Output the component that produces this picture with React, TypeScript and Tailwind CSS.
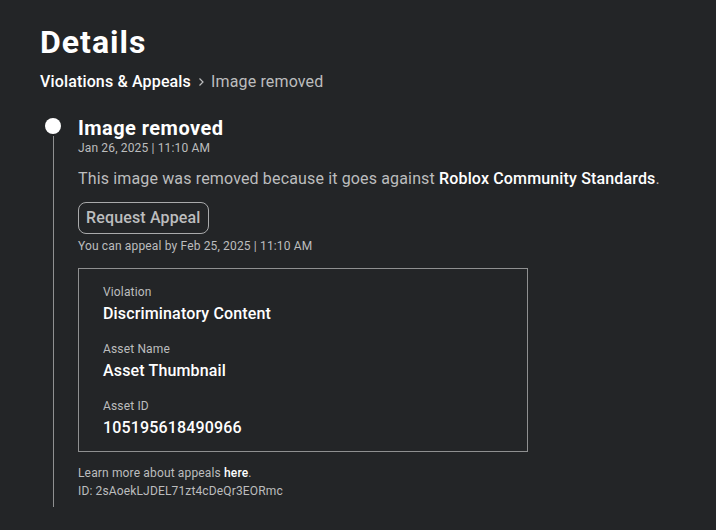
import React from 'react';

const Field = ({ label, value }: { label: string; value: string }) => (
  <div className="flex flex-col">
    <span className="text-[12px] leading-[16px] text-[#bcbdbe]">{label}</span>
    <span className="mt-[4px] text-[16px] leading-[20px] font-medium text-white">{value}</span>
  </div>
);

export default function App() {
  return (
    <div
      className="min-h-[530px] w-full bg-[#232527] px-10 pt-[26px] tracking-[0.15px] text-white"
      style={{ fontFamily: 'Roboto, "Noto Sans", sans-serif' }}
    >
      <h1 className="text-[32px] leading-[32px] font-bold tracking-[1px]">Details</h1>
      <nav className="mt-[14px] flex items-center text-[16px] leading-[20px]">
        <span className="font-medium text-white">Violations &amp; Appeals</span>
        <svg className="mx-[4px] h-[12px] w-[12px] text-[#bcbdbe]" viewBox="0 0 12 12" fill="none">
          <path d="M4.5 2.5 8 6l-3.5 3.5" stroke="currentColor" strokeWidth="1.2" />
        </svg>
        <span className="text-[#bcbdbe]">Image removed</span>
      </nav>

      <div className="mt-[25px] flex">
        <div className="flex w-[26px] shrink-0 flex-col items-center pt-[1px]">
          <div className="h-[16px] w-[16px] rounded-full bg-white" />
          <div className="mt-[2px] h-[371px] w-px bg-[#8f9091]" />
        </div>
        <div className="ml-[12px] flex flex-col">
          <h2 className="text-[20px] leading-[22px] font-bold tracking-[0.45px]">Image removed</h2>
          <span className="mt-[1px] text-[12px] leading-[16px] text-[#bcbdbe]">Jan 26, 2025 | 11:10 AM</span>
          <p className="mt-[13px] text-[16px] leading-[20px] whitespace-nowrap text-[#bcbdbe]">
            This image was removed because it goes against{' '}
            <span className="font-medium text-white">Roblox Community Standards</span>.
          </p>
          <div className="mt-[13px]">
            <button className="h-[32px] rounded-[8px] border border-[#a9aaab] px-[7px] text-[16px] font-medium tracking-[0.15px] text-[#bcbdbe]">
              Request Appeal
            </button>
          </div>
          <span className="mt-[4px] text-[12px] leading-[16px] text-[#bcbdbe]">
            You can appeal by Feb 25, 2025 | 11:10 AM
          </span>
          <div className="mt-[14px] flex w-[450px] flex-col gap-[17px] border border-[#8f9091] px-[24px] pt-[15px] pb-[13px]">
            <Field label="Violation" value="Discriminatory Content" />
            <Field label="Asset Name" value="Asset Thumbnail" />
            <Field label="Asset ID" value="105195618490966" />
          </div>
          <span className="mt-[12px] text-[12px] leading-[18px] text-[#bcbdbe]">
            Learn more about appeals <span className="font-medium text-white">here</span>.
          </span>
          <span className="text-[12px] leading-[18px] text-[#bcbdbe]">ID: 2sAoekLJDEL71zt4cDeQr3EORmc</span>
        </div>
      </div>
    </div>
  );
}
